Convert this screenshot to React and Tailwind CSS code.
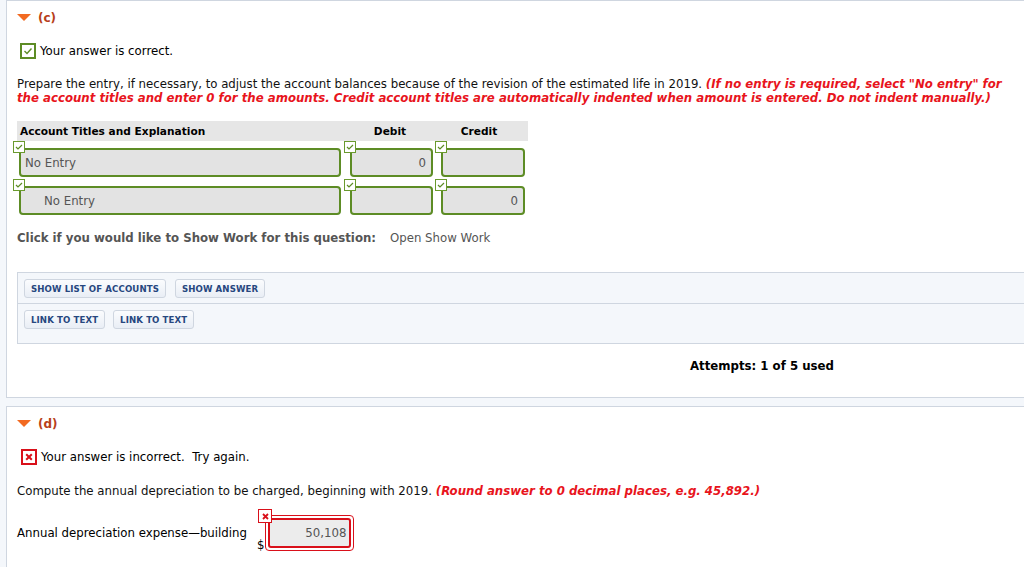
import React from "react";

const F = "font-['DejaVu_Sans','Liberation_Sans',sans-serif]";

function Tri() {
  return (
    <svg width="14" height="8" viewBox="0 0 14 8" className="shrink-0">
      <polygon points="0,0 14,0 7,7" fill="#f26a21" />
    </svg>
  );
}

function BigCheck() {
  return (
    <div className="w-[16px] h-[16px] border-[2px] border-[#5d8c25] bg-white flex items-center justify-center shrink-0">
      <svg width="10" height="8" viewBox="0 0 10 8">
        <path d="M1.5 4 L4 6.5 L8.5 1.5" stroke="#5d8c25" strokeWidth="1.4" fill="none" />
      </svg>
    </div>
  );
}

function BigX() {
  return (
    <div className="w-[16px] h-[16px] border-[2px] border-[#d9101a] bg-white flex items-center justify-center shrink-0">
      <svg width="8" height="8" viewBox="0 0 8 8">
        <path d="M1.2 1.2 L6.8 6.8 M6.8 1.2 L1.2 6.8" stroke="#d9101a" strokeWidth="2" />
      </svg>
    </div>
  );
}

function SmallCheck() {
  return (
    <div className="absolute -left-[6px] -top-[7px] w-[12px] h-[12px] border border-[#6a9a2e] bg-white flex items-center justify-center z-10">
      <svg width="8" height="6" viewBox="0 0 8 6">
        <path d="M1 3 L3 5 L7 1" stroke="#5d8c25" strokeWidth="1.2" fill="none" />
      </svg>
    </div>
  );
}

function Cell({ w, children, align = "left", pl = "pl-[4px]" }) {
  return (
    <div className="relative">
      <SmallCheck />
      <div
        className={`h-[29px] border-[2px] border-[#5d8c25] rounded-[4px] bg-[#e3e3e3] flex items-center text-[#555] ${
          align === "right" ? "justify-end pr-[5px]" : pl
        } ${w}`}
      >
        {children}
      </div>
    </div>
  );
}

function Btn({ children }) {
  return (
    <div className="h-[19px] px-[6px] flex items-center border border-[#cfd6e0] rounded-[3px] bg-gradient-to-b from-[#fbfcfe] to-[#e9eef5] text-[#27477f] font-bold text-[8.6px] tracking-[0.1px]">
      {children}
    </div>
  );
}

export default function App() {
  return (
    <div className={`w-[1024px] h-[567px] overflow-hidden bg-[#f4f7fb] ${F} text-[11.75px] leading-[14px] text-black`}>
      {/* Card c */}
      <div className="ml-[6px] w-[1100px] h-[398px] bg-white border border-[#cfd6e0] pl-[10px]">
        <div className="mt-[10px] h-[14px] flex items-center gap-[7px]">
          <Tri />
          <span className="font-bold text-[#b8401a] text-[12px]">(c)</span>
        </div>
        <div className="mt-[18px] h-[16px] flex items-center gap-[4px] pl-[3px]">
          <BigCheck />
          <span>Your answer is correct.</span>
        </div>
        <p className="mt-[18px] w-[1000px] text-[#111]">
          Prepare the entry, if necessary, to adjust the account balances because of the revision of the estimated life in 2019.{" "}
          <span className="font-bold italic text-[#e8141c]">
            (If no entry is required, select "No entry" for the account titles and enter 0 for the amounts. Credit account titles are automatically indented when amount is entered. Do not indent manually.)
          </span>
        </p>
        <div className="mt-[16px] w-[511px] h-[20px] bg-[#e6e6e6] flex items-center font-bold text-[10.6px]">
          <div className="w-[333px] pl-[3px]">Account Titles and Explanation</div>
          <div className="w-[80px] text-center">Debit</div>
          <div className="w-[98px] text-center">Credit</div>
        </div>
        <div className="pt-[7px] flex flex-col gap-[9px]">
          <div className="flex">
            <div className="ml-[2px]">
              <Cell w="w-[322px]">No Entry</Cell>
            </div>
            <div className="ml-[9px]">
              <Cell w="w-[83px]" align="right">0</Cell>
            </div>
            <div className="ml-[8px]">
              <Cell w="w-[84px]" align="right"></Cell>
            </div>
          </div>
          <div className="flex">
            <div className="ml-[2px]">
              <Cell w="w-[322px]" pl="pl-[23px]">No Entry</Cell>
            </div>
            <div className="ml-[9px]">
              <Cell w="w-[83px]" align="right"></Cell>
            </div>
            <div className="ml-[8px]">
              <Cell w="w-[84px]" align="right">0</Cell>
            </div>
          </div>
        </div>
        <div className="mt-[16px] flex text-[#555]">
          <span className="font-bold w-[373px]">Click if you would like to Show Work for this question:</span>
          <span>Open Show Work</span>
        </div>
        <div className="mt-[27px] bg-[#f4f7fb] border border-[#cfd6e0] border-r-0">
          <div className="h-[31px] pt-[6px] pl-[6px] flex gap-[9px] border-b border-[#cfd6e0]">
            <Btn>SHOW LIST OF ACCOUNTS</Btn>
            <Btn>SHOW ANSWER</Btn>
          </div>
          <div className="h-[39px] pt-[6px] pl-[6px] flex gap-[8px]">
            <Btn>LINK TO TEXT</Btn>
            <Btn>LINK TO TEXT</Btn>
          </div>
        </div>
        <div className="mt-[15px] pl-[673px] font-bold">Attempts: 1 of 5 used</div>
      </div>

      {/* Card d */}
      <div className="mt-[8px] ml-[6px] w-[1100px] h-[200px] bg-white border border-[#cfd6e0] pl-[10px]">
        <div className="mt-[10px] h-[14px] flex items-center gap-[7px]">
          <Tri />
          <span className="font-bold text-[#b8401a] text-[12px]">(d)</span>
        </div>
        <div className="mt-[18px] h-[16px] flex items-center gap-[4px] pl-[4px]">
          <BigX />
          <span>Your answer is incorrect.&nbsp; Try again.</span>
        </div>
        <p className="mt-[19px] text-[#111]">
          Compute the annual depreciation to be charged, beginning with 2019.{" "}
          <span className="font-bold italic text-[#e8141c]">(Round answer to 0 decimal places, e.g. 45,892.)</span>
        </p>
        <div className="mt-[17px] flex items-center">
          <span className="w-[240px]">Annual depreciation expense—building</span>
          <span className="self-end -mb-[1px] mr-[1px]">$</span>
          <div className="relative">
            <div className="absolute -left-[7px] -top-[6px] w-[14px] h-[14px] border border-[#d9101a] bg-white flex items-center justify-center z-10">
              <svg width="7" height="7" viewBox="0 0 7 7">
                <path d="M1 1 L6 6 M6 1 L1 6" stroke="#d9101a" strokeWidth="1.8" />
              </svg>
            </div>
            <div className="w-[89px] h-[36px] border border-[#d9101a] rounded-[4px] p-[2px] bg-white">
              <div className="h-full border-[2px] border-[#d9101a] rounded-[3px] bg-[#ececec] flex items-center justify-end pr-[3px] text-[#555]">
                50,108
              </div>
            </div>
          </div>
        </div>
      </div>
    </div>
  );
}
